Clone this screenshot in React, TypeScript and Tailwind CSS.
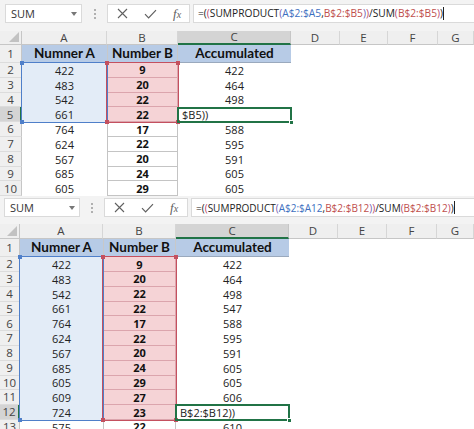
import React from "react";

type Seg = [string, string];
type Row = [string, string, string];

const K = "text-[#222]";
const P2 = "text-[#b8456b]";
const P3 = "text-[#6f5bb0]";
const BL = "text-[#3d6fc0]";
const RD = "text-[#c0504d]";

const topFormula: Seg[] = [
  ["=(", K], ["(", P2], ["SUMPRODUCT", K], ["(", P3], ["A$2:$A5", BL], [",", K],
  ["B$2:$B5", RD], [")", P3], [")", P2], ["/SUM", K], ["(", P2], ["B$2:$B5", RD], [")", P2], [")", K],
];
const botFormula: Seg[] = [
  ["=(", K], ["(", P2], ["SUMPRODUCT", K], ["(", P3], ["A$2:$A12", BL], [",", K],
  ["B$2:$B12", RD], [")", P3], [")", P2], ["/SUM", K], ["(", P2], ["B$2:$B12", RD], [")", P2], [")", K],
];

const topData: Row[] = [
  ["422", "9", "422"], ["483", "20", "464"], ["542", "22", "498"], ["661", "22", ""],
  ["764", "17", "588"], ["624", "22", "595"], ["567", "20", "591"], ["685", "24", "605"], ["605", "29", "605"],
];
const botData: Row[] = [
  ["422", "9", "422"], ["483", "20", "464"], ["542", "22", "498"], ["661", "22", "547"],
  ["764", "17", "588"], ["624", "22", "595"], ["567", "20", "591"], ["685", "24", "605"],
  ["605", "29", "605"], ["609", "27", "606"], ["724", "23", ""], ["575", "22", "610"],
];

const topCols = ["w-[22px]", "w-[85px]", "w-[71px]", "w-[113px]", "w-[49px]", "w-[48px]", "w-[50px]", "w-[36px]"];
const botCols = ["w-[20px]", "w-[83px]", "w-[73px]", "w-[113px]", "w-[49px]", "w-[49px]", "w-[50px]", "w-[37px]"];
const letters = ["A", "B", "C", "D", "E", "F", "G"];

function XIcon() {
  return (
    <svg width="11" height="11" viewBox="0 0 11 11">
      <path d="M1 1L10 10M10 1L1 10" stroke="#606060" strokeWidth="1.1" fill="none" />
    </svg>
  );
}
function CheckIcon() {
  return (
    <svg width="13" height="10" viewBox="0 0 13 10">
      <path d="M1 5.2L4.6 8.8L12 1.2" stroke="#606060" strokeWidth="1.2" fill="none" />
    </svg>
  );
}
function Fx() {
  return (
    <span className="italic text-[13px] leading-none text-[#606060] font-['Liberation_Serif',serif]">
      f<span className="text-[10px]">x</span>
    </span>
  );
}

function FormulaBar({ segs, bottom }: { segs: Seg[]; bottom?: boolean }) {
  return (
    <div className={bottom ? "h-[28px] bg-[#f3f3f3] pt-[2px] flex items-start" : "h-[31px] bg-[#f3f3f3] pt-[4px] flex items-start"}>
      <div className={bottom
        ? "ml-[4px] w-[76px] h-[19px] bg-white border border-[#dadada] flex items-center justify-between pl-[5px] pr-[4px]"
        : "ml-[5px] w-[77px] h-[19px] bg-white border border-[#dadada] flex items-center justify-between pl-[5px] pr-[4px]"}>
        <span className="text-[11px] text-[#333] leading-none">SUM</span>
        <svg width="6" height="4" viewBox="0 0 6 4"><path d="M0 0H6L3 4Z" fill="#777" /></svg>
      </div>
      <div className={bottom ? "w-[24px] h-[19px] flex flex-col items-center justify-center gap-[2px]" : "w-[25px] h-[19px] flex flex-col items-center justify-center gap-[2px]"}>
        <div className="w-[2px] h-[2px] bg-[#b0b0b0]" />
        <div className="w-[2px] h-[2px] bg-[#b0b0b0]" />
        <div className="w-[2px] h-[2px] bg-[#b0b0b0]" />
      </div>
      <div className={bottom
        ? "w-[84px] h-[19px] bg-white border border-[#dadada] flex items-center pl-[9px] gap-[16px]"
        : "w-[83px] h-[19px] bg-white border border-[#dadada] flex items-center pl-[9px] gap-[16px]"}>
        <XIcon />
        <CheckIcon />
        <Fx />
      </div>
      <div className={bottom
        ? "ml-[3px] flex-1 h-[19px] bg-white border-y border-l border-[#dadada] flex items-center pl-[4px] text-[10px] leading-none whitespace-nowrap"
        : "ml-[3px] flex-1 h-[19px] bg-white border-y border-l border-[#dadada] flex items-center pl-[4px] text-[10.2px] leading-none whitespace-nowrap"}>
        {segs.map(([t, c], i) => (
          <span key={i} className={c}>{t}</span>
        ))}
        <span className="inline-block w-[1px] h-[13px] bg-[#222]" />
      </div>
    </div>
  );
}

function ColHeader({ cols, tall }: { cols: string[]; tall?: boolean }) {
  return (
    <div className={tall ? "flex h-[15px]" : "flex h-[14px]"}>
      <div className={`${cols[0]} shrink-0 h-full bg-[#efefef] border-r border-b border-[#c6c6c6] flex items-end justify-end pr-[2px] pb-[2px]`}>
        <svg width="10" height="10" viewBox="0 0 10 10"><path d="M10 0V10H0Z" fill="#c2c2c2" /></svg>
      </div>
      {letters.map((l, i) => (
        <div
          key={l}
          className={`${cols[i + 1]} shrink-0 h-full flex items-center justify-center text-[11.5px] leading-none text-[#444] ${
            l === "C"
              ? "bg-[#d4d4d4] border-r border-r-[#c6c6c6] border-b-2 border-b-[#217346]"
              : "bg-[#efefef] border-r border-r-[#d6d6d6] border-b border-b-[#c6c6c6]"
          }`}
        >
          {l}
        </div>
      ))}
    </div>
  );
}

function HeadRow({ cols }: { cols: string[] }) {
  const h = "shrink-0 h-full flex items-center justify-center bg-[#b7cbe6] text-[13.5px] leading-none font-bold text-[#111] font-['Lato',sans-serif] border-b border-b-[#9aa9bd]";
  return (
    <div className="flex h-[18px]">
      <div className={`${cols[0]} shrink-0 h-full bg-[#efefef] border-r border-r-[#c6c6c6] border-b border-b-[#dcdcdc] flex items-center justify-center text-[11.5px] leading-none text-[#444]`}>1</div>
      <div className={`${cols[1]} ${h}`}>Numner A</div>
      <div className={`${cols[2]} ${h} border-x border-x-[#c8c8c8]`}>Number B</div>
      <div className={`${cols[3]} ${h}`}>Accumulated</div>
      {cols.slice(4).map((w, i) => (
        <div key={i} className={`${w} shrink-0 h-full bg-white`} />
      ))}
    </div>
  );
}

function DataRow({ n, cols, r, inRange, active, activeText }: { n: number; cols: string[]; r: Row; inRange: boolean; active: boolean; activeText: string }) {
  return (
    <div className="flex h-[14.8px]">
      <div
        className={`${cols[0]} shrink-0 h-full flex items-center justify-center text-[11.5px] leading-none text-[#444] border-b border-b-[#dcdcdc] ${
          active ? "bg-[#d4d4d4] border-r-2 border-r-[#217346]" : "bg-[#efefef] border-r border-r-[#c6c6c6]"
        }`}
      >
        {n}
      </div>
      <div className={`${cols[1]} shrink-0 h-full flex items-center justify-center text-[11px] leading-none text-[#222] ${inRange ? "bg-[#e3ecf7]" : "bg-white"}`}>
        {r[0]}
      </div>
      <div
        className={`${cols[2]} shrink-0 h-full flex items-center justify-center text-[11px] leading-none font-bold text-[#111] border-x border-b ${
          inRange ? "bg-[#f5d3d6] border-[#dba5ad]" : "bg-white border-[#c4c4c4]"
        }`}
      >
        {r[1]}
      </div>
      <div
        className={`${cols[3]} shrink-0 h-full flex items-center text-[11px] leading-none text-[#222] bg-white ${
          active ? "justify-start pl-[4px]" : "justify-center"
        }`}
      >
        {active ? activeText : r[2]}
      </div>
      {cols.slice(4).map((w, i) => (
        <div key={i} className={`${w} shrink-0 h-full bg-white`} />
      ))}
    </div>
  );
}

function Handles({ c }: { c: string }) {
  return (
    <>
      <div className={`absolute -left-[2px] -top-[2px] w-[4px] h-[4px] ${c}`} />
      <div className={`absolute -right-[2px] -top-[2px] w-[4px] h-[4px] ${c}`} />
      <div className={`absolute -left-[2px] -bottom-[2px] w-[4px] h-[4px] ${c}`} />
      <div className={`absolute -right-[2px] -bottom-[2px] w-[4px] h-[4px] ${c}`} />
    </>
  );
}

function TopSheet() {
  return (
    <div>
      <FormulaBar segs={topFormula} />
      <div className="relative">
        <ColHeader cols={topCols} />
        <HeadRow cols={topCols} />
        {topData.map((r, i) => (
          <DataRow key={i} n={i + 2} cols={topCols} r={r} inRange={i + 2 <= 5} active={i + 2 === 5} activeText="$B5))" />
        ))}
        <div className="absolute left-[21px] top-[31px] w-[87px] h-[60.5px] border-[1.5px] border-[#4f7fc9]">
          <Handles c="bg-[#4f7fc9]" />
        </div>
        <div className="absolute left-[106px] top-[31px] w-[73px] h-[60.5px] border-[1.5px] border-[#c4505f]">
          <Handles c="bg-[#c4505f]" />
        </div>
        <div className="absolute left-[177px] top-[75.5px] w-[115px] h-[16.5px] border-2 border-[#217346]">
          <div className="absolute -right-[4px] -bottom-[4px] w-[5px] h-[5px] bg-[#217346] border border-white" />
        </div>
      </div>
    </div>
  );
}

function BottomSheet() {
  return (
    <div>
      <FormulaBar segs={botFormula} bottom />
      <div className="relative">
        <ColHeader cols={botCols} tall />
        <HeadRow cols={botCols} />
        {botData.map((r, i) => (
          <DataRow key={i} n={i + 2} cols={botCols} r={r} inRange={i + 2 <= 12} active={i + 2 === 12} activeText="B$2:$B12))" />
        ))}
        <div className="absolute left-[19px] top-[32px] w-[85px] h-[164.5px] border-[1.5px] border-[#4f7fc9]">
          <Handles c="bg-[#4f7fc9]" />
        </div>
        <div className="absolute left-[102px] top-[32px] w-[75px] h-[164.5px] border-[1.5px] border-[#c4505f]">
          <Handles c="bg-[#c4505f]" />
        </div>
        <div className="absolute left-[175px] top-[180px] w-[115px] h-[16.5px] border-2 border-[#217346]">
          <div className="absolute -right-[4px] -bottom-[4px] w-[5px] h-[5px] bg-[#217346] border border-white" />
        </div>
      </div>
    </div>
  );
}

export default function App() {
  return (
    <div className="w-[474px] h-[429px] overflow-hidden bg-white font-['Open_Sans',sans-serif]">
      <TopSheet />
      <BottomSheet />
    </div>
  );
}
